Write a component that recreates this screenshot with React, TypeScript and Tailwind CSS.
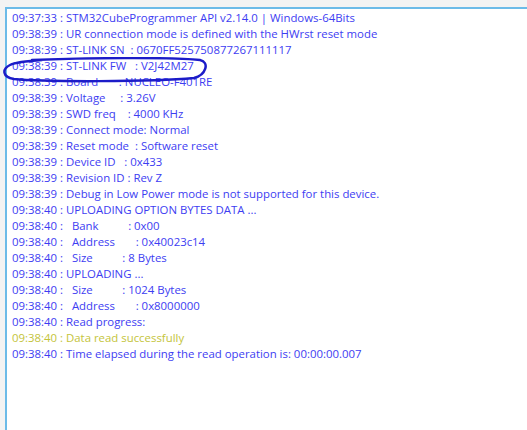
import React from 'react';

type Line = { t: string; msg: string; ok?: boolean };

const lines: Line[] = [
    { t: '09:37:33', msg: 'STM32CubeProgrammer API v2.14.0 | Windows-64Bits' },
    { t: '09:38:39', msg: 'UR connection mode is defined with the HWrst reset mode' },
    { t: '09:38:39', msg: 'ST-LINK SN  : 0670FF525750877267111117' },
    { t: '09:38:39', msg: 'ST-LINK FW   : V2J42M27' },
    { t: '09:38:39', msg: 'Board       : NUCLEO-F401RE' },
    { t: '09:38:39', msg: 'Voltage     : 3.26V' },
    { t: '09:38:39', msg: 'SWD freq    : 4000 KHz' },
    { t: '09:38:39', msg: 'Connect mode: Normal' },
    { t: '09:38:39', msg: 'Reset mode  : Software reset' },
    { t: '09:38:39', msg: 'Device ID   : 0x433' },
    { t: '09:38:39', msg: 'Revision ID : Rev Z' },
    { t: '09:38:39', msg: 'Debug in Low Power mode is not supported for this device.' },
    { t: '09:38:40', msg: 'UPLOADING OPTION BYTES DATA ...' },
    { t: '09:38:40', msg: '  Bank          : 0x00' },
    { t: '09:38:40', msg: '  Address       : 0x40023c14' },
    { t: '09:38:40', msg: '  Size          : 8 Bytes' },
    { t: '09:38:40', msg: 'UPLOADING ...' },
    { t: '09:38:40', msg: '  Size          : 1024 Bytes' },
    { t: '09:38:40', msg: '  Address       : 0x8000000' },
    { t: '09:38:40', msg: 'Read progress:' },
    { t: '09:38:40', msg: 'Data read successfully', ok: true },
    { t: '09:38:40', msg: 'Time elapsed during the read operation is: 00:00:00.007' },
];

export default function App() {
    return (
        <div className="h-[430px] w-[527px] overflow-hidden bg-[#f3f3f3] pl-[5px] pt-[7px]">
            <div className="relative h-[440px] w-[540px] border-l-2 border-t-2 border-[#6cbbe8] bg-white pl-[5px] pt-[1px]">
                <div className="text-[11.4px] leading-[16px] text-[#3d3df2]" style={{ fontFamily: '"Open Sans", "Noto Sans", sans-serif' }}>
                    {lines.map((l, i) => (
                        <div key={i} className={l.ok ? 'whitespace-pre text-[#c4c43a]' : 'whitespace-pre'}>
                            {l.t} : {l.msg}
                        </div>
                    ))}
                </div>
                <svg className="absolute left-[-5px] top-[48px]" width="210" height="28" viewBox="0 0 210 28">
                    <path
                        d="M30 3 C 80 1, 170 0, 198 3 C 208 5, 204 18, 192 21 C 150 25, 40 25, 12 22 C 0 20, 0 12, 8 8 C 14 5, 24 4, 40 3"
                        fill="none"
                        stroke="#1c1cc8"
                        strokeWidth="2.5"
                        strokeLinecap="round"
                    />
                </svg>
            </div>
        </div>
    );
}
